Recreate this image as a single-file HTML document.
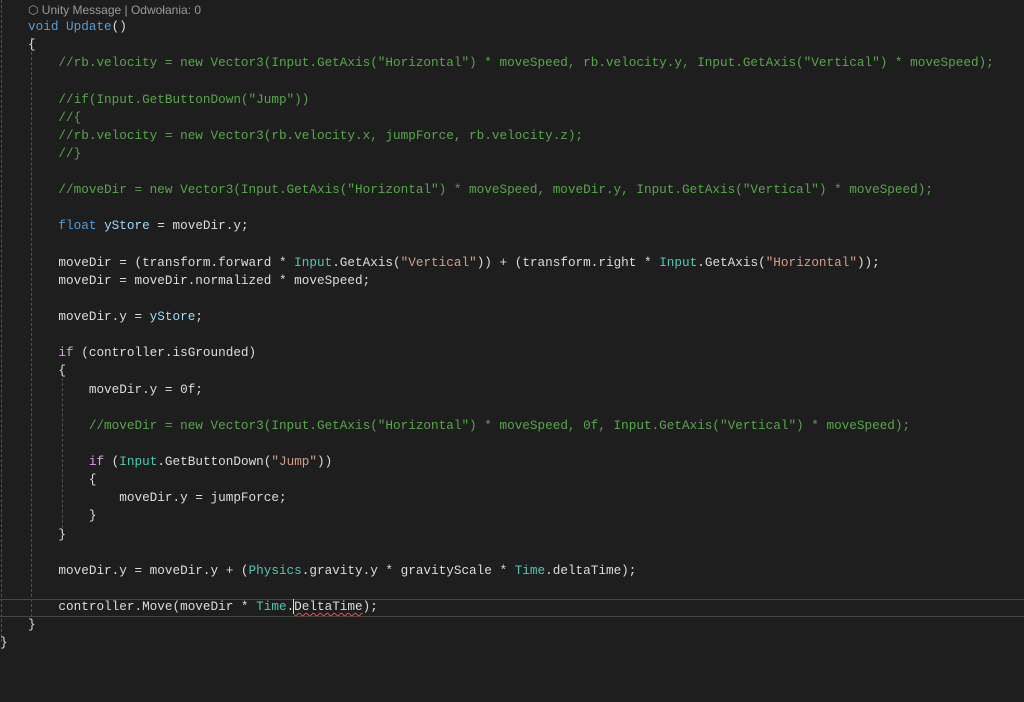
<!DOCTYPE html>
<html><head><meta charset="utf-8"><style>
html,body{margin:0;padding:0;background:#1e1e1e;width:1024px;height:702px;overflow:hidden;position:relative}
pre{position:absolute;left:28px;top:18px;margin:0;font-family:"Liberation Mono","DejaVu Sans Mono",monospace;font-size:12.68px;line-height:18.12px;color:#dcdcdc;white-space:pre}
.k{color:#569cd6}.c{color:#57a64a}.t{color:#4ec9b0}.s{color:#d69d85}.p{color:#d8a0df}.v{color:#9cdcfe}
.lens{position:absolute;left:28px;top:3px;font-family:"Liberation Sans",sans-serif;font-size:12px;color:#9a9a9a}
.g{position:absolute;width:0;border-left:1px dashed #505050}
.cur{position:absolute;left:0;top:599px;width:1024px;height:16px;border-top:1px solid #464646;border-bottom:1px solid #464646}
.sq{text-decoration:underline wavy #f14c4c;text-decoration-thickness:1px;text-underline-offset:2px}
.caret{border-left:1px solid #dcdcdc;margin-left:-1px}
</style></head><body>
<div class="g" style="left:1px;top:0;height:642px"></div>
<div class="g" style="left:31px;top:37px;height:580px"></div>
<div class="g" style="left:62px;top:373px;height:160px"></div>
<div class="cur"></div>
<div class="lens">&#x2B21; Unity Message | Odwołania: 0</div>
<pre><span class="k">void</span> <span class="k">Update</span>()
{
    <span class="c">//rb.velocity = new Vector3(Input.GetAxis("Horizontal") * moveSpeed, rb.velocity.y, Input.GetAxis("Vertical") * moveSpeed);</span>

    <span class="c">//if(Input.GetButtonDown("Jump"))</span>
    <span class="c">//{</span>
    <span class="c">//rb.velocity = new Vector3(rb.velocity.x, jumpForce, rb.velocity.z);</span>
    <span class="c">//}</span>

    <span class="c">//moveDir = new Vector3(Input.GetAxis("Horizontal") * moveSpeed, moveDir.y, Input.GetAxis("Vertical") * moveSpeed);</span>

    <span class="k">float</span> <span class="v">yStore</span> = moveDir.y;

    moveDir = (transform.forward * <span class="t">Input</span>.GetAxis(<span class="s">"Vertical"</span>)) + (transform.right * <span class="t">Input</span>.GetAxis(<span class="s">"Horizontal"</span>));
    moveDir = moveDir.normalized * moveSpeed;

    moveDir.y = <span class="v">yStore</span>;

    <span class="p">if</span> (controller.isGrounded)
    {
        moveDir.y = 0f;

        <span class="c">//moveDir = new Vector3(Input.GetAxis("Horizontal") * moveSpeed, 0f, Input.GetAxis("Vertical") * moveSpeed);</span>

        <span class="p">if</span> (<span class="t">Input</span>.GetButtonDown(<span class="s">"Jump"</span>))
        {
            moveDir.y = jumpForce;
        }
    }

    moveDir.y = moveDir.y + (<span class="t">Physics</span>.gravity.y * gravityScale * <span class="t">Time</span>.deltaTime);

    controller.Move(moveDir * <span class="t">Time</span>.<span class="caret"></span><span class="sq">DeltaTime</span>);
}
</pre>
<pre style="left:0;top:634px">}</pre>
</body></html>
